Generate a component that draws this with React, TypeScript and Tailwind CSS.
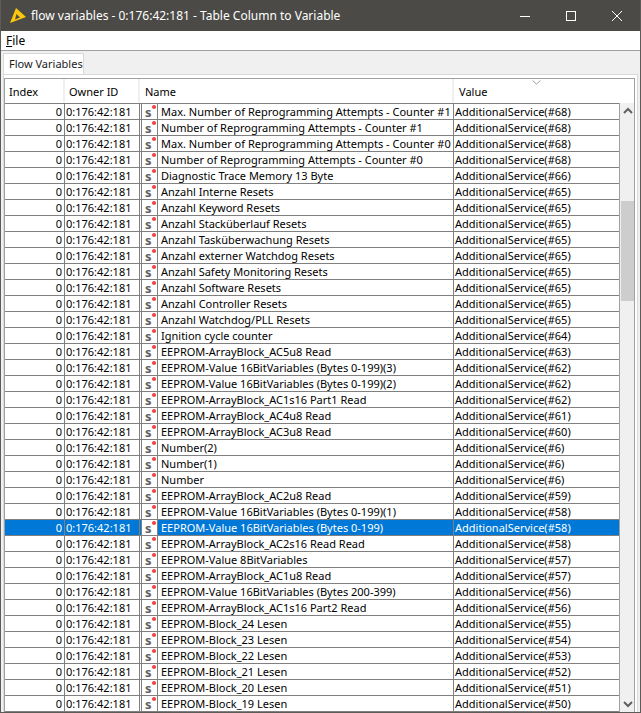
const rows: [string, number][] = [
  ["Max. Number of Reprogramming Attempts - Counter #1", 68],
  ["Number of Reprogramming Attempts - Counter #1", 68],
  ["Max. Number of Reprogramming Attempts - Counter #0", 68],
  ["Number of Reprogramming Attempts - Counter #0", 68],
  ["Diagnostic Trace Memory 13 Byte", 66],
  ["Anzahl Interne Resets", 65],
  ["Anzahl Keyword Resets", 65],
  ["Anzahl Stacküberlauf Resets", 65],
  ["Anzahl Tasküberwachung Resets", 65],
  ["Anzahl externer Watchdog Resets", 65],
  ["Anzahl Safety Monitoring Resets", 65],
  ["Anzahl Software Resets", 65],
  ["Anzahl Controller Resets", 65],
  ["Anzahl Watchdog/PLL Resets", 65],
  ["Ignition cycle counter", 64],
  ["EEPROM-ArrayBlock_AC5u8 Read", 63],
  ["EEPROM-Value 16BitVariables (Bytes 0-199)(3)", 62],
  ["EEPROM-Value 16BitVariables (Bytes 0-199)(2)", 62],
  ["EEPROM-ArrayBlock_AC1s16 Part1 Read", 62],
  ["EEPROM-ArrayBlock_AC4u8 Read", 61],
  ["EEPROM-ArrayBlock_AC3u8 Read", 60],
  ["Number(2)", 6],
  ["Number(1)", 6],
  ["Number", 6],
  ["EEPROM-ArrayBlock_AC2u8 Read", 59],
  ["EEPROM-Value 16BitVariables (Bytes 0-199)(1)", 58],
  ["EEPROM-Value 16BitVariables (Bytes 0-199)", 58],
  ["EEPROM-ArrayBlock_AC2s16 Read Read", 58],
  ["EEPROM-Value 8BitVariables", 57],
  ["EEPROM-ArrayBlock_AC1u8 Read", 57],
  ["EEPROM-Value 16BitVariables (Bytes 200-399)", 56],
  ["EEPROM-ArrayBlock_AC1s16 Part2 Read", 56],
  ["EEPROM-Block_24 Lesen", 55],
  ["EEPROM-Block_23 Lesen", 54],
  ["EEPROM-Block_22 Lesen", 53],
  ["EEPROM-Block_21 Lesen", 52],
  ["EEPROM-Block_20 Lesen", 51],
  ["EEPROM-Block_19 Lesen", 50],
];

const SELECTED = 26;

const App = () => {
  return (
    <div className="h-[713px] w-[641px] overflow-hidden flex flex-col border-x border-b border-[#5c5b58] bg-[#f0f0f0] font-['Noto_Sans',sans-serif] text-[11px] text-black">
      <div className="h-[31px] shrink-0 bg-[#4b4a47] flex items-center text-white text-[12px]">
        <svg className="ml-[8px] w-[18px] h-[16px]" viewBox="0 0 18 16">
          <path d="M7 0 L17 9 L1 15 Z" fill="#fcc80d" />
          <path d="M7.5 6 L11 9.5 L6 11.5 Z" fill="#4b4a47" />
        </svg>
        <span className="ml-[4px]">flow variables - 0:176:42:181 - Table Column to Variable</span>
        <div className="ml-auto flex items-center">
          <svg className="w-[46px] h-[16px]" viewBox="0 0 46 16">
            <path d="M18 8.5 H28" stroke="white" strokeWidth="1" />
          </svg>
          <svg className="w-[46px] h-[16px]" viewBox="0 0 46 16">
            <rect x="18.5" y="3.5" width="9" height="9" fill="none" stroke="white" />
          </svg>
          <svg className="w-[46px] h-[16px]" viewBox="0 0 46 16">
            <path d="M18 3 L28 13 M28 3 L18 13" stroke="white" strokeWidth="1" />
          </svg>
        </div>
      </div>

      <div className="h-[20px] shrink-0 bg-white border-b border-[#a0a0a0] pl-[5px] text-[12px] leading-[19px]">
        <span className="underline">F</span>ile
      </div>

      <div className="flex-1 min-h-0 flex flex-col pt-[2px] px-[2px]">
        <div className="h-[21px] shrink-0 flex">
          <div className="w-[81px] bg-white border border-b-0 border-[#d9d9d9] pl-[5px] leading-[20px] text-[#1a1a1a]">
            Flow Variables
          </div>
        </div>
        <div className="flex-1 min-h-0 border-t border-x border-[#d9d9d9] bg-white pt-[3px] pr-[2px] pl-[0px] overflow-hidden">
          <div className="h-full border-l border-t border-r border-[#a0a0a0] flex flex-col overflow-hidden">
            <div className="h-[24px] shrink-0 flex bg-white">
              <div className="w-[60px] border-r-2 border-[#f0f0f0] pl-[4px] pt-[5px]">Index</div>
              <div className="w-[75px] border-r-2 border-[#f0f0f0] pl-[4px] pt-[5px]">Owner ID</div>
              <div className="w-[314px] border-r-2 border-[#f0f0f0] pl-[5px] pt-[5px]">Name</div>
              <div className="relative w-[165px] pl-[5px] pt-[5px]">
                Value
                <svg className="absolute left-[78px] top-[1px] w-[9px] h-[5px]" viewBox="0 0 9 5">
                  <path d="M0.5 0.5 L4.5 4 L8.5 0.5" fill="none" stroke="#a0a0a0" />
                </svg>
              </div>
            </div>
            <div className="flex-1 min-h-0 flex overflow-hidden">
              <div className="w-[614px] shrink-0 overflow-hidden border-t border-[#808080]">
                {rows.map(([name, id], i) => (
                  <div
                    key={i}
                    className={
                      i === SELECTED
                        ? "h-[16px] flex leading-[15px] border-b border-[#808080] bg-[#0078d7] text-white"
                        : "h-[16px] flex leading-[15px] border-b border-[#808080]"
                    }
                  >
                    <div className="w-[60px] text-right pr-[2px] border-r border-[#808080]">0</div>
                    <div className="w-[75px] pl-[1px] border-r border-[#808080]">0:176:42:181</div>
                    <div className="w-[314px] flex border-r border-[#808080]">
                      <div className="relative w-[17px] h-[15px] shrink-0 ml-[1px] border-x border-[#808080] bg-white">
                        <span className="absolute left-[3px] top-[1px] text-[13px] leading-[14px] font-bold text-[#606060]">s</span>
                        <span className="absolute right-[1px] top-[1px] w-[4px] h-[4px] rounded-full bg-[#f04040]" />
                      </div>
                      <span className="pl-[3px] whitespace-nowrap">{name}</span>
                    </div>
                    <div className="w-[165px] pl-[1px]">AdditionalService(#{id})</div>
                  </div>
                ))}
              </div>
              <div className="flex-1 bg-[#f0f0f0] flex flex-col items-center border-l border-[#a0a0a0]">
                <svg className="w-[16px] h-[16px] shrink-0" viewBox="0 0 16 16">
                  <path d="M4 10 L8 6 L12 10" fill="none" stroke="#606060" strokeWidth="2" />
                </svg>
                <div className="mt-[82px] w-full px-[1px] h-[100px] shrink-0">
                  <div className="h-full bg-[#cdcdcd]" />
                </div>
                <svg className="mt-auto w-[16px] h-[16px] shrink-0" viewBox="0 0 16 16">
                  <path d="M4 6 L8 10 L12 6" fill="none" stroke="#606060" strokeWidth="2" />
                </svg>
              </div>
            </div>
          </div>
        </div>
      </div>
    </div>
  );
};

export default App;
